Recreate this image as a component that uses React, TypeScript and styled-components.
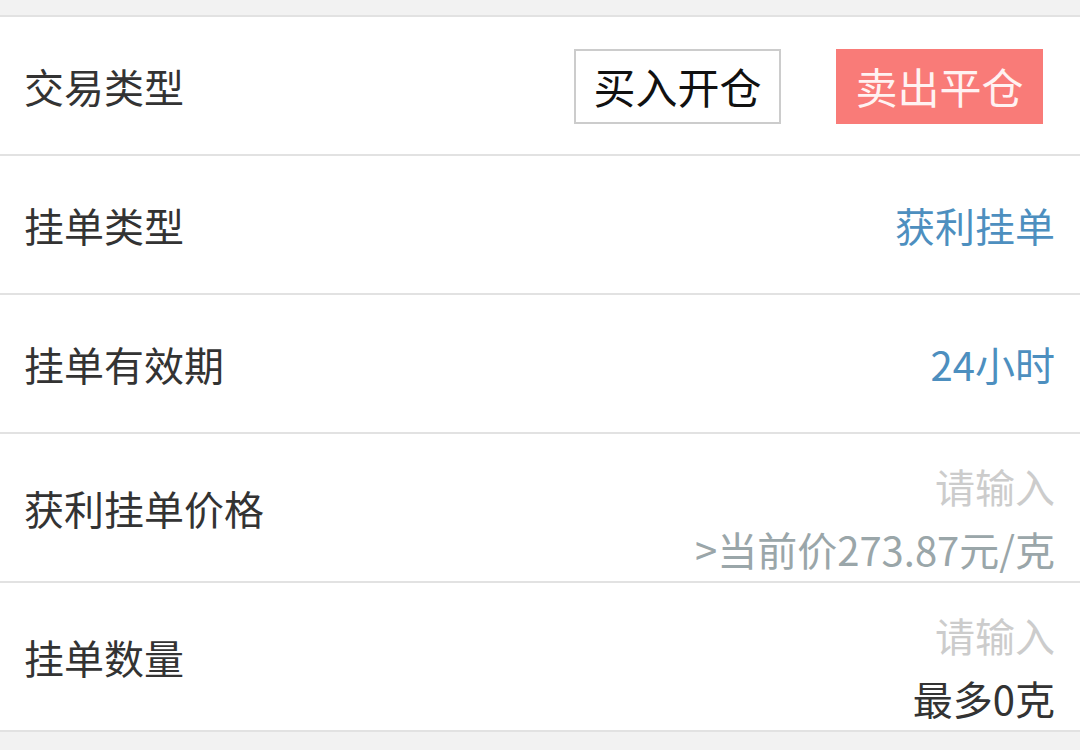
import styled, { createGlobalStyle } from "styled-components";

const GlobalStyle = createGlobalStyle`
    html, body {
        margin: 0;
        padding: 0;
        background: #f2f2f2;
        font-family: "Noto Sans CJK SC", "Noto Sans", sans-serif;
    }
    * {
        box-sizing: border-box;
    }
`;

const Page = styled.div`
    width: 1080px;
    height: 750px;
    padding-top: 15px;
    background: #f2f2f2;
    overflow: hidden;
`;

const Form = styled.div`
    background: #fff;
    border-top: 2px solid #e2e2e2;
`;

const Row = styled.div<{ $tall?: boolean }>`
    display: flex;
    align-items: center;
    justify-content: space-between;
    height: ${(props) => (props.$tall ? "149px" : "139px")};
    padding: 0 25px 0 24px;
    border-bottom: 2px solid #e2e2e2;
`;

const Label = styled.span`
    font-size: 40px;
    color: #333;
    line-height: 1;
`;

const Value = styled.span`
    font-size: 40px;
    color: #4d8fbf;
    line-height: 1;
`;

const ButtonGroup = styled.div`
    display: flex;
    gap: 55px;
    margin-right: 12px;
    margin-top: 1px;
`;

const TypeButton = styled.button<{ $active?: boolean }>`
    width: 207px;
    height: 75px;
    padding: 0;
    font-family: inherit;
    font-size: 42px;
    line-height: 1;
    cursor: pointer;
    border: ${(props) => (props.$active ? "none" : "2px solid #cccccc")};
    background: ${(props) => (props.$active ? "#f97b78" : "#fff")};
    color: ${(props) => (props.$active ? "#fff2f2" : "#111")};
`;

const InputBox = styled.div`
    display: flex;
    flex-direction: column;
    align-items: flex-end;
    align-self: stretch;
    padding-top: 21px;
`;

const Input = styled.input`
    width: 400px;
    height: 64px;
    border: none;
    outline: none;
    padding: 0;
    text-align: right;
    font-family: inherit;
    font-size: 40px;
    color: #333;
    background: transparent;

    &::placeholder {
        color: #cccccc;
    }
`;

const Hint = styled.span<{ $dark?: boolean }>`
    font-size: 40px;
    line-height: 64px;
    color: ${(props) => (props.$dark ? "#333" : "#9aa6a9")};
`;

function App() {
    return (
        <Page>
            <GlobalStyle />
            <Form>
                <Row>
                    <Label>交易类型</Label>
                    <ButtonGroup>
                        <TypeButton>买入开仓</TypeButton>
                        <TypeButton $active>卖出平仓</TypeButton>
                    </ButtonGroup>
                </Row>
                <Row>
                    <Label>挂单类型</Label>
                    <Value>获利挂单</Value>
                </Row>
                <Row>
                    <Label>挂单有效期</Label>
                    <Value>24小时</Value>
                </Row>
                <Row $tall>
                    <Label>获利挂单价格</Label>
                    <InputBox>
                        <Input placeholder="请输入" />
                        <Hint>&gt;当前价273.87元/克</Hint>
                    </InputBox>
                </Row>
                <Row $tall>
                    <Label>挂单数量</Label>
                    <InputBox>
                        <Input placeholder="请输入" />
                        <Hint $dark>最多0克</Hint>
                    </InputBox>
                </Row>
            </Form>
        </Page>
    );
}

export default App;
